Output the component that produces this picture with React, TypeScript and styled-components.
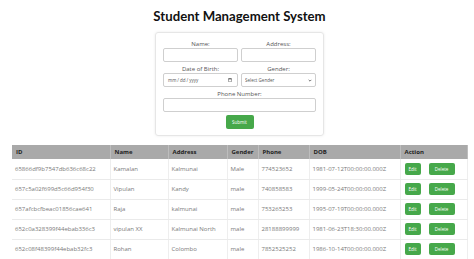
import React from "react";
import styled, { createGlobalStyle } from "styled-components";

const Global = createGlobalStyle`
  html, body { margin: 0; padding: 0; background: #fff; }
  body { font-family: "Open Sans", "Noto Sans", sans-serif; color: #333; }
  * { box-sizing: border-box; }
`;

const Page = styled.div`
  padding: 8px 7px 0 12px;
`;

const Title = styled.h1`
  margin: 0 0 7px;
  text-align: center;
  font-family: Lato, "Open Sans", sans-serif;
  font-weight: 700;
  font-size: 13.2px;
  line-height: 17px;
  color: #111;
`;

const Card = styled.form`
  width: 169px;
  margin: 0 auto;
  padding: 8px 7px 6px;
  border: 1px solid #e6e6e6;
  border-radius: 3px;
  box-shadow: 0 0 3px rgba(0, 0, 0, 0.08);
  display: flex;
  flex-direction: column;
  align-items: center;
  gap: 4px;
  line-height: 1;
`;

const Row = styled.div`
  display: grid;
  grid-template-columns: 75px 75px;
  gap: 3px;
  width: 153px;
`;

const Field = styled.div<{ $wide?: boolean }>`
  display: flex;
  flex-direction: column;
  align-items: center;
  width: ${(p) => (p.$wide ? "153px" : "75px")};
`;

const Label = styled.label`
  font-size: 6px;
  line-height: 7px;
  color: #555;
`;

const Input = styled.input`
  display: block;
  width: 100%;
  height: 14px;
  margin: 0;
  padding: 0 3px;
  border: 1px solid #cfcfcf;
  border-radius: 2px;
  font-family: inherit;
  font-size: 4.5px;
  color: #555;
  background: #fff;
  outline: none;
`;

const Select = styled.select`
  display: block;
  width: 100%;
  height: 14px;
  margin: 0;
  padding: 0 3px;
  border: 1px solid #cfcfcf;
  border-radius: 2px;
  font-family: inherit;
  font-size: 4.5px;
  color: #555;
  appearance: none;
  -webkit-appearance: none;
  background: #fff url("data:image/svg+xml;utf8,<svg xmlns='http://www.w3.org/2000/svg' width='6' height='4' viewBox='0 0 6 4'><path d='M1 1l2 2 2-2' fill='none' stroke='%23333' stroke-width='1'/></svg>") no-repeat right 3px center;
  background-size: 4px 3px;
`;

const GreenButton = styled.button<{ $w: number; $h: number }>`
  display: block;
  width: ${(p) => p.$w}px;
  height: ${(p) => p.$h}px;
  padding: 0;
  border: none;
  border-radius: 2px;
  background: #46a84a;
  color: #fff;
  font-family: inherit;
  font-size: 4.5px;
  line-height: 1;
  cursor: pointer;
`;

const SubmitWrap = styled.div`
  display: flex;
  justify-content: center;
  margin-top: -1px;
`;

const Table = styled.table`
  margin-top: 9px;
  width: 455px;
  border-collapse: collapse;
  table-layout: fixed;
`;

const Th = styled.th`
  height: 14px;
  padding: 0 4px;
  background: #a9a9a9;
  text-align: left;
  font-size: 6px;
  line-height: 1;
  font-weight: 700;
  color: #222;
  border-right: 1px solid #bdbdbd;
  white-space: nowrap;
`;

const Td = styled.td`
  height: 20px;
  padding: 0 3px;
  font-size: 6px;
  line-height: 1;
  color: #7a7a7a;
  border-bottom: 1px solid #eaeaea;
  border-right: 1px solid #eeeeee;
  white-space: nowrap;
  overflow: hidden;
`;

const Actions = styled.div`
  display: flex;
  gap: 8px;
  padding-left: 1px;
`;

const students = [
  { id: "65866df9b7547db636c68c22", name: "Kamalan", address: "Kalmunai", gender: "Male", phone: "774523652", dob: "1981-07-12T00:00:00.000Z" },
  { id: "657c5a02f699d5c66d954f30", name: "Vipulan", address: "Kandy", gender: "male", phone: "740858583", dob: "1999-05-24T00:00:00.000Z" },
  { id: "657afcbcfbeac01856cae641", name: "Raja", address: "kalmunai", gender: "male", phone: "753265253", dob: "1995-07-19T00:00:00.000Z" },
  { id: "652c0a328399f44ebab336c3", name: "vipulan XX", address: "Kalmunai North", gender: "male", phone: "28188899999", dob: "1981-06-23T18:30:00.000Z" },
  { id: "652c08f48399f44ebab32fc3", name: "Rohan", address: "Colombo", gender: "male", phone: "7852525252", dob: "1986-10-14T00:00:00.000Z" },
];

const widths = [98, 58, 59, 31, 51, 91, 67];

export default function App() {
  return (
    <Page>
      <Global />
      <Title>Student Management System</Title>
      <Card onSubmit={(e) => e.preventDefault()}>
        <Row>
          <Field>
            <Label>Name:</Label>
            <Input type="text" />
          </Field>
          <Field>
            <Label>Address:</Label>
            <Input type="text" />
          </Field>
        </Row>
        <Row>
          <Field>
            <Label>Date of Birth:</Label>
            <Input type="date" />
          </Field>
          <Field>
            <Label>Gender:</Label>
            <Select defaultValue="">
              <option value="">Select Gender</option>
              <option value="male">Male</option>
              <option value="female">Female</option>
            </Select>
          </Field>
        </Row>
        <Field $wide>
          <Label>Phone Number:</Label>
          <Input type="text" />
        </Field>
        <SubmitWrap>
          <GreenButton type="submit" $w={28} $h={14}>Submit</GreenButton>
        </SubmitWrap>
      </Card>
      <Table>
        <colgroup>
          {widths.map((w, i) => (
            <col key={i} style={{ width: w }} />
          ))}
        </colgroup>
        <thead>
          <tr>
            <Th>ID</Th>
            <Th>Name</Th>
            <Th>Address</Th>
            <Th>Gender</Th>
            <Th>Phone</Th>
            <Th>DOB</Th>
            <Th>Action</Th>
          </tr>
        </thead>
        <tbody>
          {students.map((s) => (
            <tr key={s.id}>
              <Td>{s.id}</Td>
              <Td>{s.name}</Td>
              <Td>{s.address}</Td>
              <Td>{s.gender}</Td>
              <Td>{s.phone}</Td>
              <Td>{s.dob}</Td>
              <Td>
                <Actions>
                  <GreenButton type="button" $w={16} $h={12}>Edit</GreenButton>
                  <GreenButton type="button" $w={26} $h={12}>Delete</GreenButton>
                </Actions>
              </Td>
            </tr>
          ))}
        </tbody>
      </Table>
    </Page>
  );
}
